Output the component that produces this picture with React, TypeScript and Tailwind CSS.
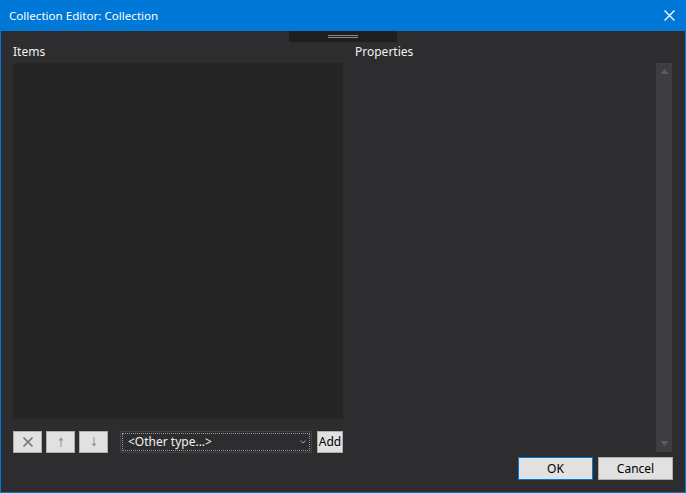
// Collection Editor dialog — dark themed WinForms-style window.
import type { JSX } from 'react';

const FONT = { fontFamily: '"Noto Sans", "Open Sans", "Liberation Sans", sans-serif' };

function CloseGlyph({ className, width = 1.1 }: { className?: string; width?: number }): JSX.Element {
  return (
    <svg viewBox="0 0 10 10" className={className} aria-hidden="true">
      <path d="M0.5 0.5 L9.5 9.5 M9.5 0.5 L0.5 9.5" stroke="currentColor" strokeWidth={width} fill="none" />
    </svg>
  );
}

// thin arrow used on the move up / move down buttons
function MoveArrow({ down }: { down?: boolean }): JSX.Element {
  return (
    <svg viewBox="0 0 6 10" className={`w-[6px] h-[10px] ${down ? 'rotate-180' : ''}`} aria-hidden="true">
      <path d="M3 1 L3 10" stroke="#8c96a6" strokeWidth="1" fill="none" />
      <path d="M0.5 3.5 L3 0.5 L5.5 3.5 Z" fill="#8c96a6" />
    </svg>
  );
}

function ToolButton({ children }: { children: JSX.Element }): JSX.Element {
  return (
    <button
      type="button"
      className="w-[29px] h-[22px] flex items-center justify-center bg-[#e1e1e1] border border-[#adadad]"
    >
      {children}
    </button>
  );
}

export default function App(): JSX.Element {
  return (
    <div
      className="relative w-[686px] h-[493px] flex flex-col bg-[#2d2d30] border border-t-0 border-[#0078d7] text-[12px] overflow-hidden"
      style={FONT}
    >
      {/* title bar */}
      <div className="h-[31px] shrink-0 bg-[#0078d7] -mx-px flex items-center pl-[9px] pr-[11px] text-white">
        <span className="text-[11.6px]">Collection Editor: Collection</span>
        <CloseGlyph className="ml-auto w-[11px] h-[11px] text-white" />
      </div>

      {/* splitter grip */}
      <div className="absolute left-[288px] top-[31px] w-[108px] h-[11px] bg-[#1e1e1e] flex flex-col items-center justify-center gap-[1px]">
        <div className="w-[30px] h-px bg-[#8a8a8a]" />
        <div className="w-[30px] h-px bg-[#8a8a8a]" />
      </div>

      <div className="flex-1 flex pl-[12px] pr-[12px] pt-[13px] pb-[12px] gap-[12px]">
        {/* items column */}
        <div className="w-[330px] flex flex-col">
          <div className="h-[19px] text-[#f1f1f1] leading-[16px]">Items</div>
          <div className="h-[356px] bg-[#252526]" />
          <div className="mt-[12px] flex items-center">
            <div className="flex gap-[4px]">
              <ToolButton>
                <CloseGlyph className="w-[10px] h-[10px] text-[#7b7b7b]" width={1.6} />
              </ToolButton>
              <ToolButton>
                <MoveArrow />
              </ToolButton>
              <ToolButton>
                <MoveArrow down />
              </ToolButton>
            </div>
            <div className="ml-[12px] w-[192px] h-[22px] border border-[#434346] p-[1px]">
              <div className="h-full border border-dotted border-[#9a9a9a] flex items-center pl-[5px] pr-[3px] text-[#f1f1f1]">
                <span className="text-[12px]">&lt;Other type...&gt;</span>
                <svg viewBox="0 0 8 5" className="ml-auto w-[6px] h-[4px]" aria-hidden="true">
                  <path d="M0.5 0.5 L4 4 L7.5 0.5" stroke="#cfcfcf" strokeWidth="1" fill="none" />
                </svg>
              </div>
            </div>
            <button
              type="button"
              className="ml-[5px] w-[26px] h-[22px] bg-[#e1e1e1] border border-[#adadad] text-black text-[12px] leading-none flex items-center justify-center"
            >
              Add
            </button>
          </div>
        </div>

        {/* properties column */}
        <div className="flex-1 flex flex-col">
          <div className="h-[19px] text-[#f1f1f1] leading-[16px]">Properties</div>
          <div className="h-[389px] flex">
            <div className="flex-1 bg-[#2d2d30]" />
            <div className="w-[16px] mr-px bg-[#3e3e42] flex flex-col items-center justify-between py-[6px]">
              <svg viewBox="0 0 8 5" className="w-[9px] h-[5px]" aria-hidden="true">
                <path d="M0 5 L4 0 L8 5 Z" fill="#5d5d61" />
              </svg>
              <svg viewBox="0 0 8 5" className="w-[9px] h-[5px]" aria-hidden="true">
                <path d="M0 0 L8 0 L4 5 Z" fill="#5d5d61" />
              </svg>
            </div>
          </div>
          <div className="mt-[5px] flex justify-end gap-[5px]">
            <button
              type="button"
              className="w-[75px] h-[23px] bg-[#e1e1e1] border border-[#0078d7] text-black text-[12px] leading-none"
            >
              OK
            </button>
            <button
              type="button"
              className="w-[75px] h-[23px] bg-[#e1e1e1] border border-[#adadad] text-black text-[12px] leading-none"
            >
              Cancel
            </button>
          </div>
        </div>
      </div>
    </div>
  );
}
